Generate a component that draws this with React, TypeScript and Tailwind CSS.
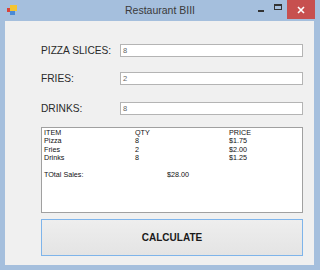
import React from "react";

function TextRow({ label, value, top }: { label: string; value: string; top: string }) {
  return (
    <div className={`flex items-center h-[13px] ${top}`}>
      <div className="w-[79px] text-[10.2px] leading-none text-[#2a2a2a] pt-[2px]">{label}</div>
      <div className="w-[183px] h-[13px] bg-white border border-[#b4b4b4] text-[7.5px] leading-[11px] pl-[2px] text-[#666]">
        {value}
      </div>
    </div>
  );
}

const rows = [
  ["ITEM", "QTY", "PRICE"],
  ["Pizza", "8", "$1.75"],
  ["Fries", "2", "$2.00"],
  ["Drinks", "8", "$1.25"],
];

export default function App() {
  return (
    <div
      className="w-[320px] h-[270px] bg-[#a5bfdd] flex flex-col overflow-hidden"
      style={{ fontFamily: '"Liberation Sans", Arial, sans-serif' }}
    >
      {/* title bar */}
      <div className="h-[21px] flex items-start relative">
        <div className="absolute left-[7px] top-[5px] w-[10px] h-[10px]">
          <div className="absolute left-[3px] top-0 w-[7px] h-[6px] bg-[#f4c430]" />
          <div className="absolute left-0 top-[3px] w-[3px] h-[4px] bg-[#d9423a]" />
          <div className="absolute left-[3px] top-[6px] w-[5px] h-[4px] bg-[#4a8ad6]" />
        </div>
        <div className="flex-1 text-center text-[10.5px] leading-none pt-[5px] text-[#3a3a3a]">Restaurant BIII</div>
        <div className="absolute left-[258px] top-[10px] w-[6px] h-[1.5px] bg-[#333]" />
        <div className="absolute left-[274px] top-[4px] w-[8px] h-[6px] border border-[#333] border-t-2" />
        <div className="absolute left-[287px] top-0 w-[28px] h-[19px] bg-[#c7504f] flex items-center justify-center">
          <svg width="8" height="8" viewBox="0 0 8 8">
            <path d="M1 1 L7 7 M7 1 L1 7" stroke="white" strokeWidth="1.6" />
          </svg>
        </div>
      </div>

      {/* client area */}
      <div className="ml-[5px] mr-[6px] mb-[5px] flex-1 bg-[#f0f0f0] pl-[36px] pt-[23px]">
        <TextRow label="PIZZA SLICES:" value="8" top="" />
        <TextRow label="FRIES:" value="2" top="mt-[15px]" />
        <TextRow label="DRINKS:" value="8" top="mt-[17px]" />

        <div className="mt-[12px] w-[262px] h-[86px] bg-white border border-[#a0a0a0] pl-[2px] pt-[1px] text-[7.2px] leading-[8.33px] text-[#111]">
          {rows.map((r) => (
            <div key={r[0]} className="flex h-[8.33px]">
              <div className="w-[91px]">{r[0]}</div>
              <div className="w-[94px]">{r[1]}</div>
              <div>{r[2]}</div>
            </div>
          ))}
          <div className="h-[8.33px]" />
          <div className="flex h-[8.33px]">
            <div className="w-[123px]">TOtal Sales:</div>
            <div>$28.00</div>
          </div>
        </div>

        <div className="mt-[6px] w-[262px] h-[37px] border border-[#7eb4ea] bg-gradient-to-b from-[#eeeeee] to-[#e4e4e4] flex items-center justify-center text-[10px] font-bold text-[#1a1a1a]">
          CALCULATE
        </div>
      </div>
    </div>
  );
}
